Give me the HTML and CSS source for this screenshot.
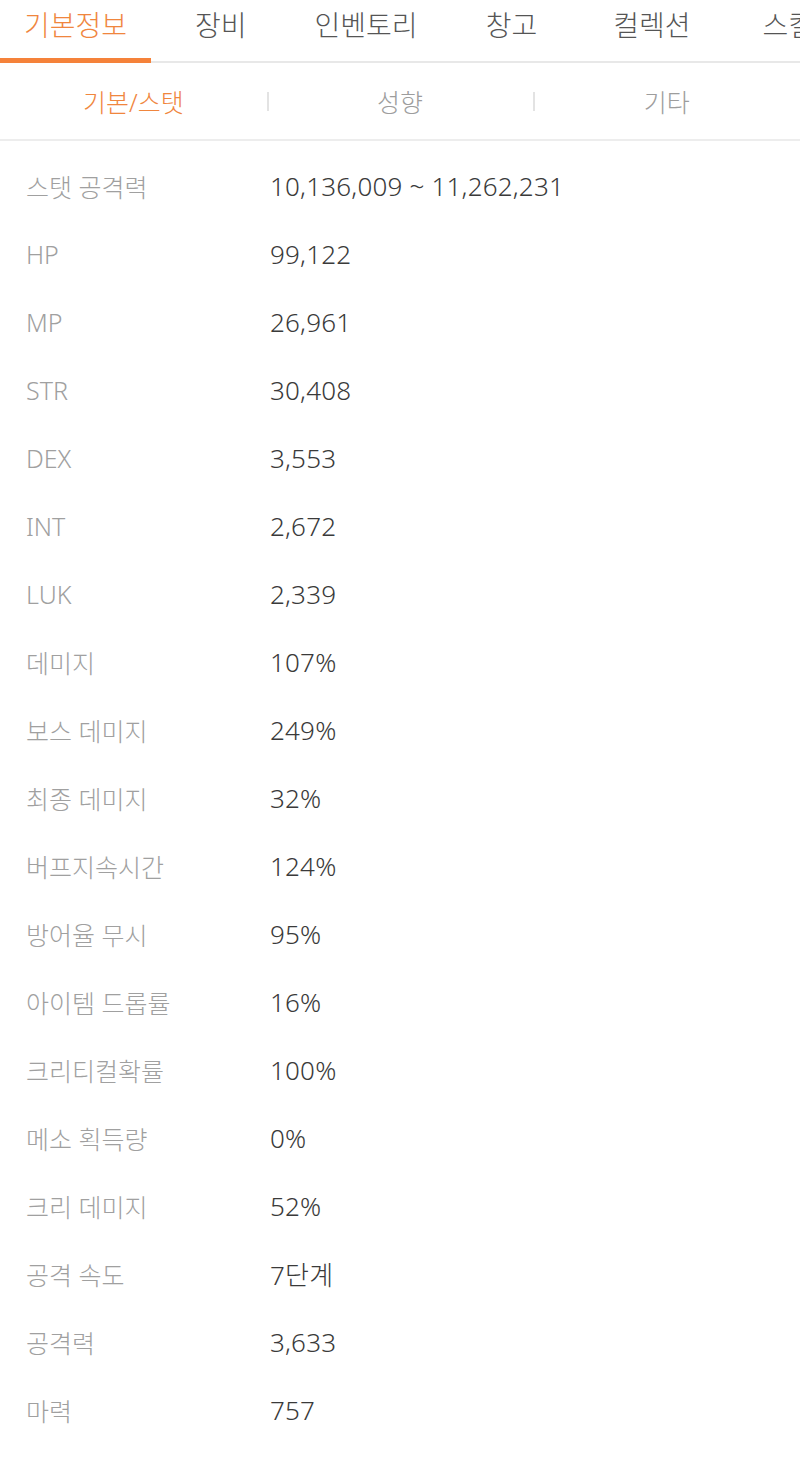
FILE: index.html
```html
<!DOCTYPE html>
<html lang="ko">
<head>
<meta charset="utf-8">
<link rel="stylesheet" href="styles.css">
</head>
<body>
<nav class="tabs">
  <div class="tab active">기본정보</div>
  <div class="tab">장비</div>
  <div class="tab">인벤토리</div>
  <div class="tab">창고</div>
  <div class="tab wide">컬렉션</div>
  <div class="tab">스킬</div>
</nav>
<div class="subtabs">
  <div class="subtab active">기본/스탯</div>
  <div class="subtab">성향</div>
  <div class="subtab">기타</div>
</div>
<div class="stats">
  <div class="row"><span class="label">스탯 공격력</span><span class="value">10,136,009 ~ 11,262,231</span></div>
  <div class="row"><span class="label">HP</span><span class="value">99,122</span></div>
  <div class="row"><span class="label">MP</span><span class="value">26,961</span></div>
  <div class="row"><span class="label">STR</span><span class="value">30,408</span></div>
  <div class="row"><span class="label">DEX</span><span class="value">3,553</span></div>
  <div class="row"><span class="label">INT</span><span class="value">2,672</span></div>
  <div class="row"><span class="label">LUK</span><span class="value">2,339</span></div>
  <div class="row"><span class="label">데미지</span><span class="value">107%</span></div>
  <div class="row"><span class="label">보스 데미지</span><span class="value">249%</span></div>
  <div class="row"><span class="label">최종 데미지</span><span class="value">32%</span></div>
  <div class="row"><span class="label">버프지속시간</span><span class="value">124%</span></div>
  <div class="row"><span class="label">방어율 무시</span><span class="value">95%</span></div>
  <div class="row"><span class="label">아이템 드롭률</span><span class="value">16%</span></div>
  <div class="row"><span class="label">크리티컬확률</span><span class="value">100%</span></div>
  <div class="row"><span class="label">메소 획득량</span><span class="value">0%</span></div>
  <div class="row"><span class="label">크리 데미지</span><span class="value">52%</span></div>
  <div class="row"><span class="label">공격 속도</span><span class="value">7단계</span></div>
  <div class="row"><span class="label">공격력</span><span class="value">3,633</span></div>
  <div class="row"><span class="label">마력</span><span class="value">757</span></div>
</div>
</body>
</html>
```
FILE: styles.css
```css
html, body {
  margin: 0;
  padding: 0;
  background: #ffffff;
  font-family: "Noto Sans", "Noto Sans CJK KR", sans-serif;
  font-weight: 300;
  width: 800px;
  overflow: hidden;
}
.tabs {
  display: flex;
  height: 61px;
  border-bottom: 2px solid #e8e8e8;
  white-space: nowrap;
}
.tab {
  flex: none;
  padding: 0 24px;
  margin-right: 20px;
  font-size: 28px;
  line-height: 51px;
  color: #555555;
  position: relative;
}
.tab.wide {
  margin-left: 8px;
  margin-right: 24px;
}
.tab.active {
  color: #f0863e;
}
.tab.active::after {
  content: "";
  position: absolute;
  left: 0;
  right: 0;
  bottom: -2px;
  height: 5px;
  background: #f5823a;
}
.subtabs {
  display: grid;
  grid-template-columns: 1fr 1fr 1fr;
  height: 76px;
  border-bottom: 2px solid #ededed;
  align-items: center;
}
.subtab {
  text-align: center;
  font-size: 25px;
  color: #9d9d9d;
  position: relative;
}
.subtab.active {
  color: #f0863e;
}
.subtab + .subtab::before {
  content: "";
  position: absolute;
  left: 0;
  top: 50%;
  margin-top: -9px;
  width: 2px;
  height: 19px;
  background: #e3e3e3;
}
.stats {
  padding-top: 11px;
}
.row {
  display: flex;
  height: 68px;
  align-items: center;
  font-size: 25px;
}
.label {
  width: 244px;
  padding-left: 26px;
  color: #a0a0a0;
  flex: none;
}
.value {
  font-size: 26px;
  letter-spacing: 0.2px;
  color: #3a3a3a;
}
```
